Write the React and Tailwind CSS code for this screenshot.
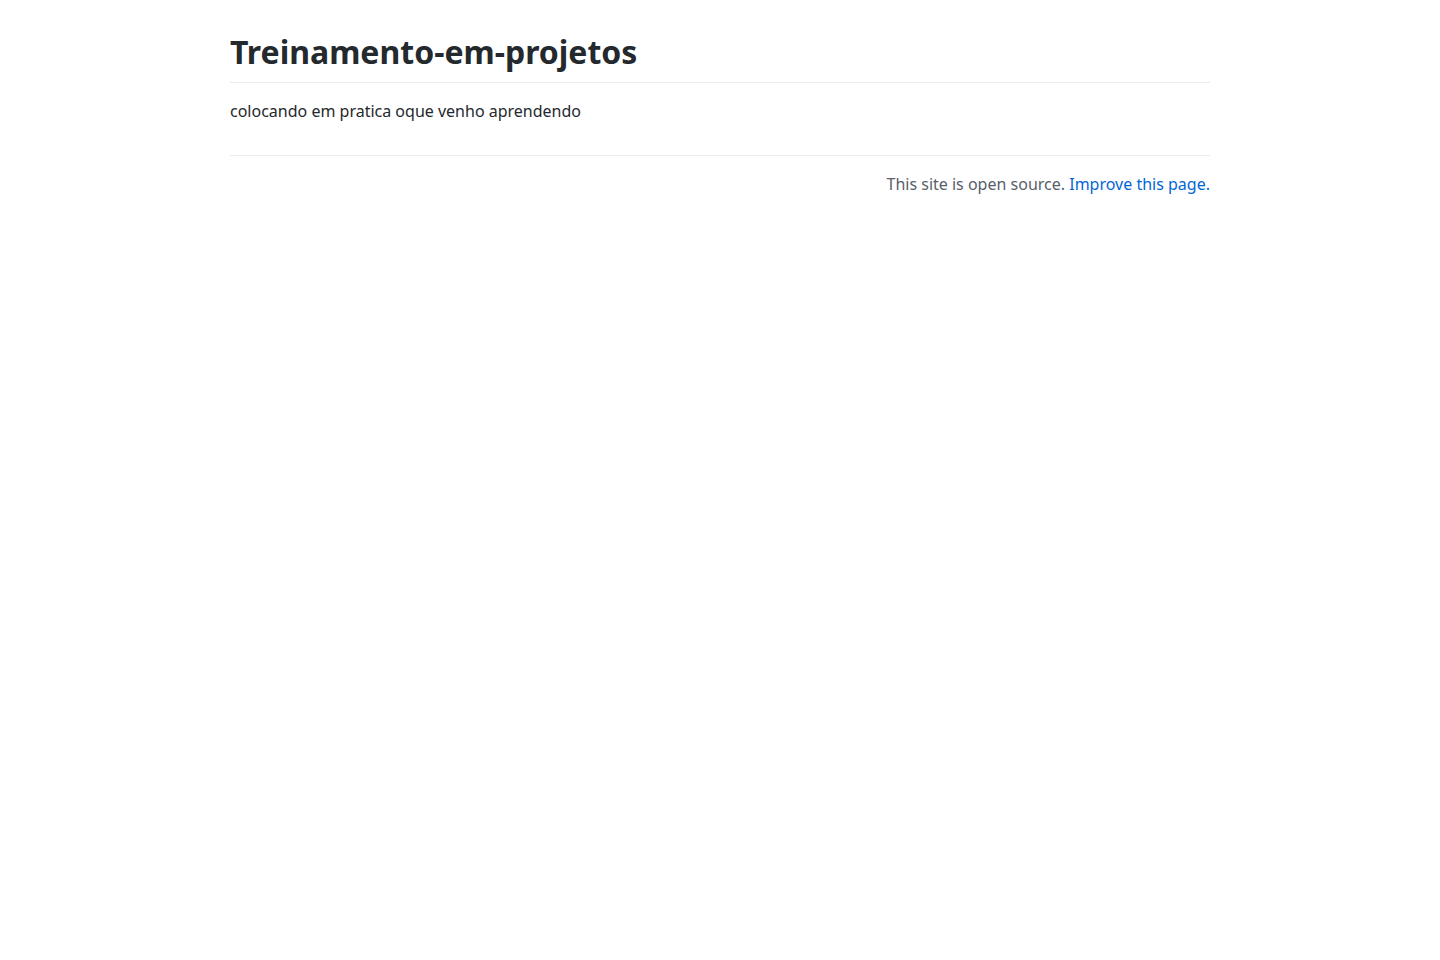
import React from 'react';

const App = () => {
  return (
    <div
      className="min-h-screen bg-white text-[#24292e] text-base leading-6"
      style={{ fontFamily: '"Noto Sans", "Liberation Sans", sans-serif' }}
    >
      <div className="mx-auto max-w-[1012px] px-4 my-8">
        <h1 className="text-[32px] font-[750] leading-[40px] pb-[9.6px] border-b border-[#eaecef] mb-4">
          Treinamento-em-projetos
        </h1>
        <p>colocando em pratica oque venho aprendendo</p>
        <div className="mt-8 pt-4 border-t border-[#eaecef] text-right text-[#586069]">
          This site is open source.{' '}
          <a href="#" className="text-[#0366d6]">
            Improve this page.
          </a>
        </div>
      </div>
    </div>
  );
};

export default App;
